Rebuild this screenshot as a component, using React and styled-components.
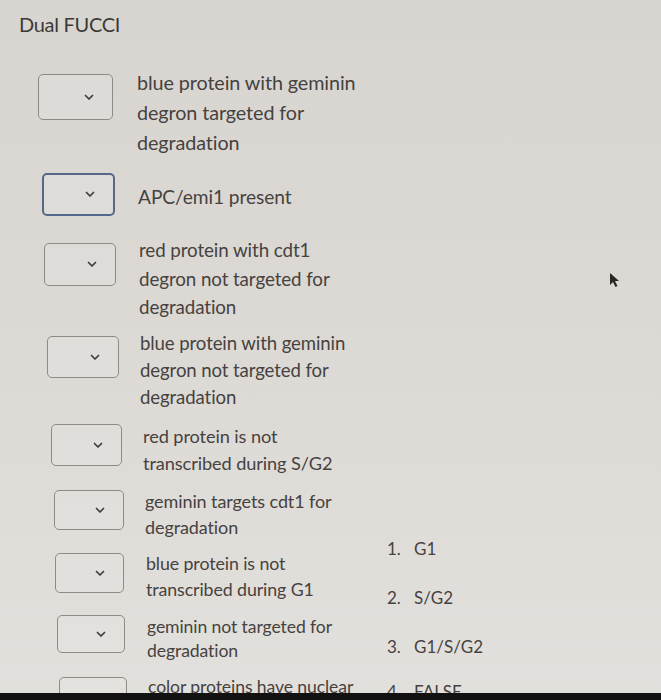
import React from "react";
import styled, { createGlobalStyle } from "styled-components";

const GlobalStyle = createGlobalStyle`
  html, body {
    margin: 0;
    padding: 0;
    background: #111;
  }
  body {
    font-family: Lato, "Open Sans", sans-serif;
  }
`;

const Screen = styled.div`
  position: relative;
  height: 693px;
  overflow: hidden;
  background: linear-gradient(180deg, #d8d5d1 0%, #dcd9d5 45%, #e2e0dc 100%);
  padding: 12px 0 0 19px;
  box-sizing: border-box;
  color: #46423f;
`;

const Bezel = styled.div`
  height: 7px;
  background: #121212;
`;

const Title = styled.h1`
  margin: 0;
  font-size: 20px;
  line-height: 24px;
  font-weight: 400;
  color: #3b3937;
  letter-spacing: -0.3px;
`;

const Body = styled.div`
  display: flex;
  margin-top: 31px;
`;

const Matches = styled.div`
  width: 368px;
  display: flex;
  flex-direction: column;
`;

const Row = styled.div`
  display: flex;
  align-items: flex-start;
  height: ${(p) => p.$h}px;
  padding-left: ${(p) => p.$x}px;
`;

const Select = styled.div`
  flex: none;
  display: flex;
  align-items: center;
  justify-content: flex-end;
  box-sizing: border-box;
  width: ${(p) => p.$w}px;
  height: ${(p) => p.$bh}px;
  margin-top: ${(p) => p.$mt}px;
  padding-right: 18px;
  border: ${(p) => (p.$focus ? "2px solid #56688a" : "1.5px solid #8e8b87")};
  border-radius: 5px;
  background: rgba(230, 228, 225, 0.35);
`;

const Label = styled.div`
  margin-left: ${(p) => p.$gap}px;
  margin-top: ${(p) => p.$mt}px;
  font-size: ${(p) => p.$fs}px;
  line-height: ${(p) => p.$lh}px;
  letter-spacing: -0.1px;
  white-space: pre-line;
`;

const Answers = styled.ol`
  list-style: none;
  margin: 0;
  padding: 470px 0 0 0;
  display: flex;
  flex-direction: column;
`;

const Answer = styled.li`
  display: flex;
  height: ${(p) => p.$h}px;
  font-size: 17px;
  line-height: 24px;
  color: #46423f;
`;

const Num = styled.span`
  width: 27px;
`;

const Pointer = styled.svg`
  position: absolute;
  left: 609px;
  top: 272px;
`;

function Chevron() {
  return (
    <svg width="10" height="7" viewBox="0 0 10 7">
      <path
        d="M1.5 1.5 L5 5 L8.5 1.5"
        fill="none"
        stroke="#3f3d3b"
        strokeWidth="1.7"
        strokeLinecap="round"
        strokeLinejoin="round"
      />
    </svg>
  );
}

// x is the select's offset from the title's left edge
const rows = [
  { x: 19, w: 75, bh: 46, bmt: 7, tmt: 0, gap: 24, fs: 19.8, lh: 30, h: 106,
    text: "blue protein with geminin\ndegron targeted for\ndegradation" },
  { x: 23, w: 73, bh: 43, bmt: 0, tmt: 9, gap: 23, fs: 19.2, lh: 29, h: 63, focus: true,
    text: "APC/emi1 present" },
  { x: 25, w: 72, bh: 43, bmt: 7, tmt: 0, gap: 23, fs: 18.8, lh: 28.5, h: 94,
    text: "red protein with cdt1\ndegron not targeted for\ndegradation" },
  { x: 28, w: 72, bh: 42, bmt: 6, tmt: 0, gap: 21, fs: 18.6, lh: 27, h: 93,
    text: "blue protein with geminin\ndegron not targeted for\ndegradation" },
  { x: 32, w: 71, bh: 42, bmt: 1, tmt: 0, gap: 21, fs: 18.2, lh: 27, h: 66,
    text: "red protein is not\ntranscribed during S/G2" },
  { x: 35, w: 70, bh: 40, bmt: 1, tmt: 0, gap: 21, fs: 18, lh: 25.5, h: 62,
    text: "geminin targets cdt1 for\ndegradation" },
  { x: 36, w: 69, bh: 40, bmt: 2, tmt: 0, gap: 22, fs: 17.8, lh: 25.5, h: 64,
    text: "blue protein is not\ntranscribed during G1" },
  { x: 38, w: 68, bh: 38, bmt: 0, tmt: 0, gap: 22, fs: 17.6, lh: 24, h: 60,
    text: "geminin not targeted for\ndegradation" },
  { x: 40, w: 68, bh: 38, bmt: 2, tmt: 0, gap: 21, fs: 17.6, lh: 24, h: 40,
    text: "color proteins have nuclear" },
];

const answers = [
  { n: "1.", label: "G1", h: 49 },
  { n: "2.", label: "S/G2", h: 49 },
  { n: "3.", label: "G1/S/G2", h: 45 },
  { n: "4.", label: "FALSE", h: 30 },
];

export default function App() {
  return (
    <>
      <GlobalStyle />
      <Screen>
        <Title>Dual FUCCI</Title>
        <Body>
          <Matches>
            {rows.map((r, i) => (
              <Row key={i} $h={r.h} $x={r.x}>
                <Select $w={r.w} $bh={r.bh} $mt={r.bmt} $focus={r.focus}>
                  <Chevron />
                </Select>
                <Label $gap={r.gap} $mt={r.tmt} $fs={r.fs} $lh={r.lh}>
                  {r.text}
                </Label>
              </Row>
            ))}
          </Matches>
          <Answers>
            {answers.map((a) => (
              <Answer key={a.n} $h={a.h}>
                <Num>{a.n}</Num>
                <span>{a.label}</span>
              </Answer>
            ))}
          </Answers>
        </Body>
        <Pointer width="12" height="16" viewBox="0 0 12 16">
          <path d="M1 1 L1 13 L4 10 L6.5 15 L8.5 14 L6 9 L10 9 Z" fill="#2a2826" />
        </Pointer>
      </Screen>
      <Bezel />
    </>
  );
}
